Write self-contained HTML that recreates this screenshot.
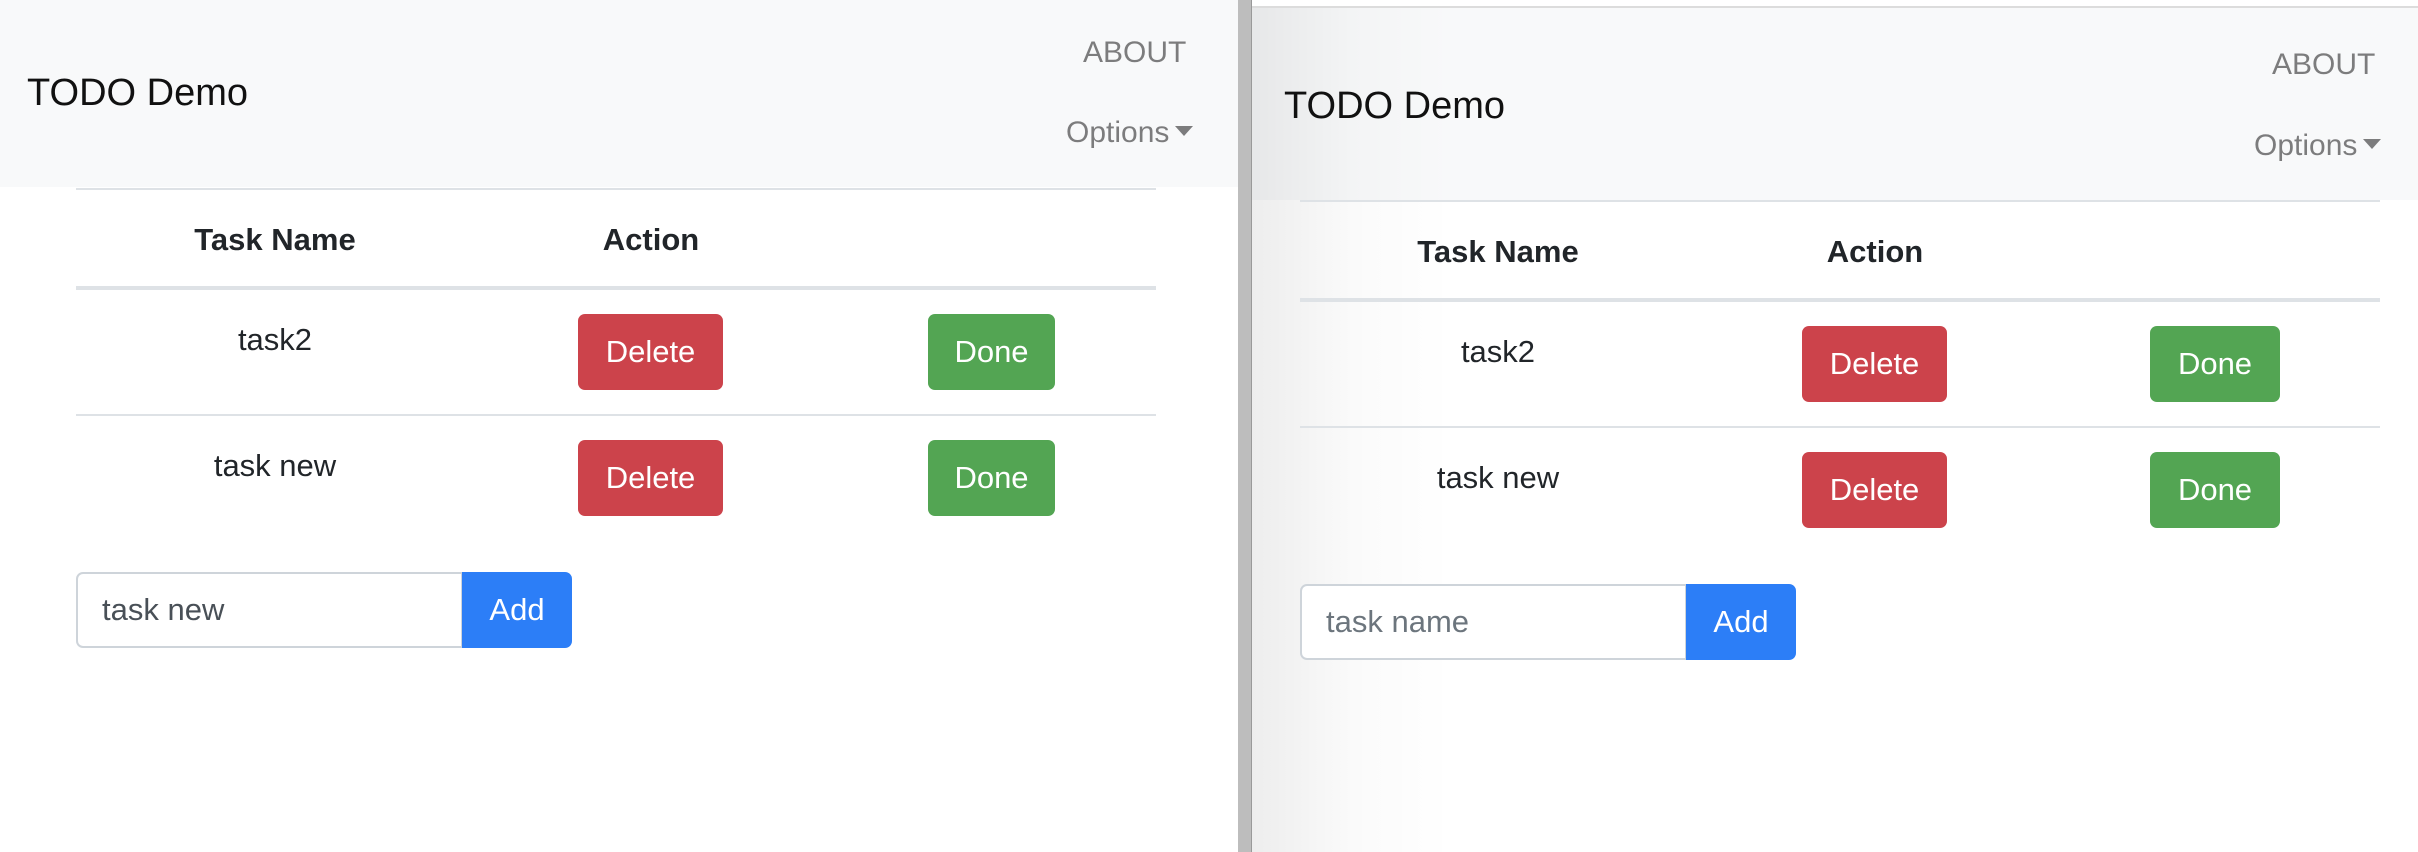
<!DOCTYPE html>
<html><head><meta charset="utf-8"><style>
*{margin:0;padding:0;box-sizing:border-box}
body{width:2418px;height:852px;position:relative;overflow:hidden;background:#fff;font-family:"Liberation Sans",Helvetica,Arial,sans-serif;color:#212529}
.a{position:absolute}
.nav{background:#f8f9fa}
.brand{font-size:38px;color:#111;line-height:1}
.nl{font-size:30px;color:rgba(0,0,0,.5);line-height:1}
.caret{display:inline-block;width:0;height:0;border-left:9px solid transparent;border-right:9px solid transparent;border-top:10px solid rgba(0,0,0,.5);vertical-align:middle;margin-left:6px;margin-top:-6px}
.hl{height:2px;background:#dee2e6}
.th{font-weight:bold;font-size:31px;line-height:1;transform:translateX(-50%);white-space:nowrap}
.td{font-size:31px;line-height:1;transform:translateX(-50%);white-space:nowrap}
.btn{color:#fff;font-size:31px;border-radius:7px;display:flex;align-items:center;justify-content:center}
.del{background:#cc434b}.done{background:#53a553}.add{background:#2c7ef7;border-radius:0 7px 7px 0}
.inp{border:2px solid #ced4da;border-radius:7px 0 0 7px;font-size:31px;display:flex;align-items:center;padding-left:24px;background:#fff}
</style></head><body>

<!-- left panel -->
<div class="a nav" style="left:0;top:0;width:1238px;height:187px"></div>
<div class="a brand" style="left:27px;top:74px">TODO Demo</div>
<div class="a nl" style="left:1083px;top:38px">ABOUT</div>
<div class="a nl" style="left:1066px;top:118px">Options<span class="caret"></span></div>
<div class="a hl" style="left:76px;top:188px;width:1080px"></div>
<div class="a th" style="left:275px;top:224px">Task Name</div>
<div class="a th" style="left:651px;top:224px">Action</div>
<div class="a hl" style="left:76px;top:286px;width:1080px;height:4px"></div>
<div class="a td" style="left:275px;top:324px">task2</div>
<div class="a btn del" style="left:578px;top:314px;width:145px;height:76px">Delete</div>
<div class="a btn done" style="left:928px;top:314px;width:127px;height:76px">Done</div>
<div class="a hl" style="left:76px;top:414px;width:1080px"></div>
<div class="a td" style="left:275px;top:450px">task new</div>
<div class="a btn del" style="left:578px;top:440px;width:145px;height:76px">Delete</div>
<div class="a btn done" style="left:928px;top:440px;width:127px;height:76px">Done</div>
<div class="a inp" style="left:76px;top:572px;width:387px;height:76px;color:#495057">task new</div>
<div class="a btn add" style="left:462px;top:572px;width:110px;height:76px">Add</div>

<!-- separator -->
<div class="a" style="left:1238px;top:0;width:14px;height:852px;background:#bdbdbd;border-right:1px solid #999"></div>

<!-- right panel -->
<div class="a" style="left:1252px;top:0;width:1166px;height:852px;background:#fff"></div>
<div class="a" style="left:1252px;top:6px;width:1166px;height:2px;background:#dcdcdc"></div>
<div class="a nav" style="left:1252px;top:8px;width:1166px;height:192px"></div>
<div class="a" style="left:1252px;top:8px;width:200px;height:844px;background:linear-gradient(to right,rgba(0,0,0,.07),rgba(0,0,0,.02) 50%,rgba(0,0,0,0))"></div>
<div class="a brand" style="left:1284px;top:87px">TODO Demo</div>
<div class="a nl" style="left:2272px;top:50px">ABOUT</div>
<div class="a nl" style="left:2254px;top:131px">Options<span class="caret"></span></div>
<div class="a hl" style="left:1300px;top:200px;width:1080px"></div>
<div class="a th" style="left:1498px;top:236px">Task Name</div>
<div class="a th" style="left:1875px;top:236px">Action</div>
<div class="a hl" style="left:1300px;top:298px;width:1080px;height:4px"></div>
<div class="a td" style="left:1498px;top:336px">task2</div>
<div class="a btn del" style="left:1802px;top:326px;width:145px;height:76px">Delete</div>
<div class="a btn done" style="left:2150px;top:326px;width:130px;height:76px">Done</div>
<div class="a hl" style="left:1300px;top:426px;width:1080px"></div>
<div class="a td" style="left:1498px;top:462px">task new</div>
<div class="a btn del" style="left:1802px;top:452px;width:145px;height:76px">Delete</div>
<div class="a btn done" style="left:2150px;top:452px;width:130px;height:76px">Done</div>
<div class="a inp" style="left:1300px;top:584px;width:387px;height:76px;color:#6c757d">task name</div>
<div class="a btn add" style="left:1686px;top:584px;width:110px;height:76px">Add</div>
</body></html>
